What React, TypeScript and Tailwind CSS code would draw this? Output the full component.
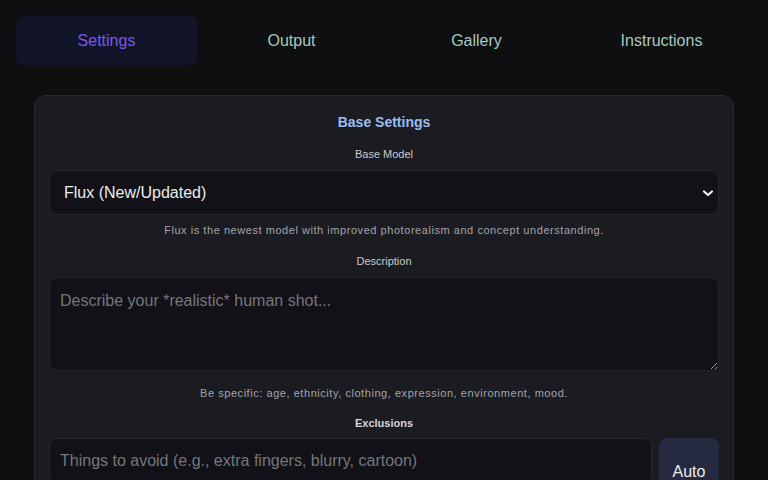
import { useState } from "react";

const tabs = ["Settings", "Output", "Gallery", "Instructions"];

export default function App() {
  const [active, setActive] = useState("Settings");
  const [model, setModel] = useState("flux");

  return (
    <div
      className="min-h-screen bg-[#0f0f11] px-4 pt-4"
      style={{ fontFamily: '"Liberation Sans", Arial, sans-serif' }}
    >
      {/* Tabs */}
      <div className="grid grid-cols-4 gap-1">
        {tabs.map((tab) => (
          <button
            key={tab}
            onClick={() => setActive(tab)}
            className={
              active === tab
                ? "h-[49px] rounded-lg bg-[#12152a] pt-px text-base text-[#7b55ee]"
                : "h-[49px] rounded-lg pt-px text-base text-[#a6c9c0]"
            }
          >
            {tab}
          </button>
        ))}
      </div>

      {/* Base settings card */}
      <div className="mx-[18px] mt-[30px] rounded-xl border border-[#2a2b31] bg-[#1b1c21] px-[14px] pt-[16px] pb-6">
        <h2 className="text-center text-sm leading-5 font-semibold text-[#9bbcf2]">
          Base Settings
        </h2>

        <label className="mt-[14px] mb-2 block text-center text-[11px] leading-4 text-[#c9c9cc]">
          Base Model
        </label>
        <div className="relative">
          <select
            value={model}
            onChange={(e) => setModel(e.target.value)}
            className="h-[45px] w-full appearance-none rounded-lg border border-[#26272e] bg-[#111117] px-[14px] text-base text-[#ececec] outline-none"
          >
            <option value="flux">Flux (New/Updated)</option>
            <option value="sdxl">SDXL</option>
          </select>
          <svg
            className="pointer-events-none absolute top-1/2 right-[5px] -translate-y-1/2"
            width="12"
            height="12"
            viewBox="0 0 12 12"
          >
            <path
              d="M2 4.5l4 3.5 4-3.5"
              fill="none"
              stroke="#f2f2f2"
              strokeWidth="2.2"
              strokeLinecap="round"
              strokeLinejoin="round"
            />
          </svg>
        </div>
        <p className="mt-[7px] text-center text-[11px] leading-4 tracking-[0.55px] text-[#a3a3aa]">
          Flux is the newest model with improved photorealism and concept
          understanding.
        </p>

        <label className="mt-[15px] mb-2 block text-center text-[11px] leading-4 text-[#c9c9cc]">
          Description
        </label>
        <textarea
          placeholder="Describe your *realistic* human shot..."
          className="block h-[94px] w-full resize-y rounded-lg border border-[#26272e] bg-[#111117] px-[10px] py-[11px] text-base text-[#ececec] outline-none placeholder:text-[#76767c]"
        />
        <p className="mt-[14px] text-center text-[11px] leading-4 tracking-[0.55px] text-[#a3a3aa]">
          Be specific: age, ethnicity, clothing, expression, environment, mood.
        </p>

        <label className="mt-[14px] mb-[7px] block text-center text-[11px] leading-4 font-semibold text-[#d4d4d8]">
          Exclusions
        </label>
        <div className="flex gap-[7px]">
          <input
            placeholder="Things to avoid (e.g., extra fingers, blurry, cartoon)"
            className="h-[45px] flex-1 rounded-lg border border-[#26272e] bg-[#111117] px-[10px] text-base text-[#ececec] outline-none placeholder:text-[#76767c]"
          />
          <button className="h-[68px] w-[60px] rounded-lg bg-[#252a40] text-base text-[#ececec]">
            Auto
          </button>
        </div>
      </div>
    </div>
  );
}
